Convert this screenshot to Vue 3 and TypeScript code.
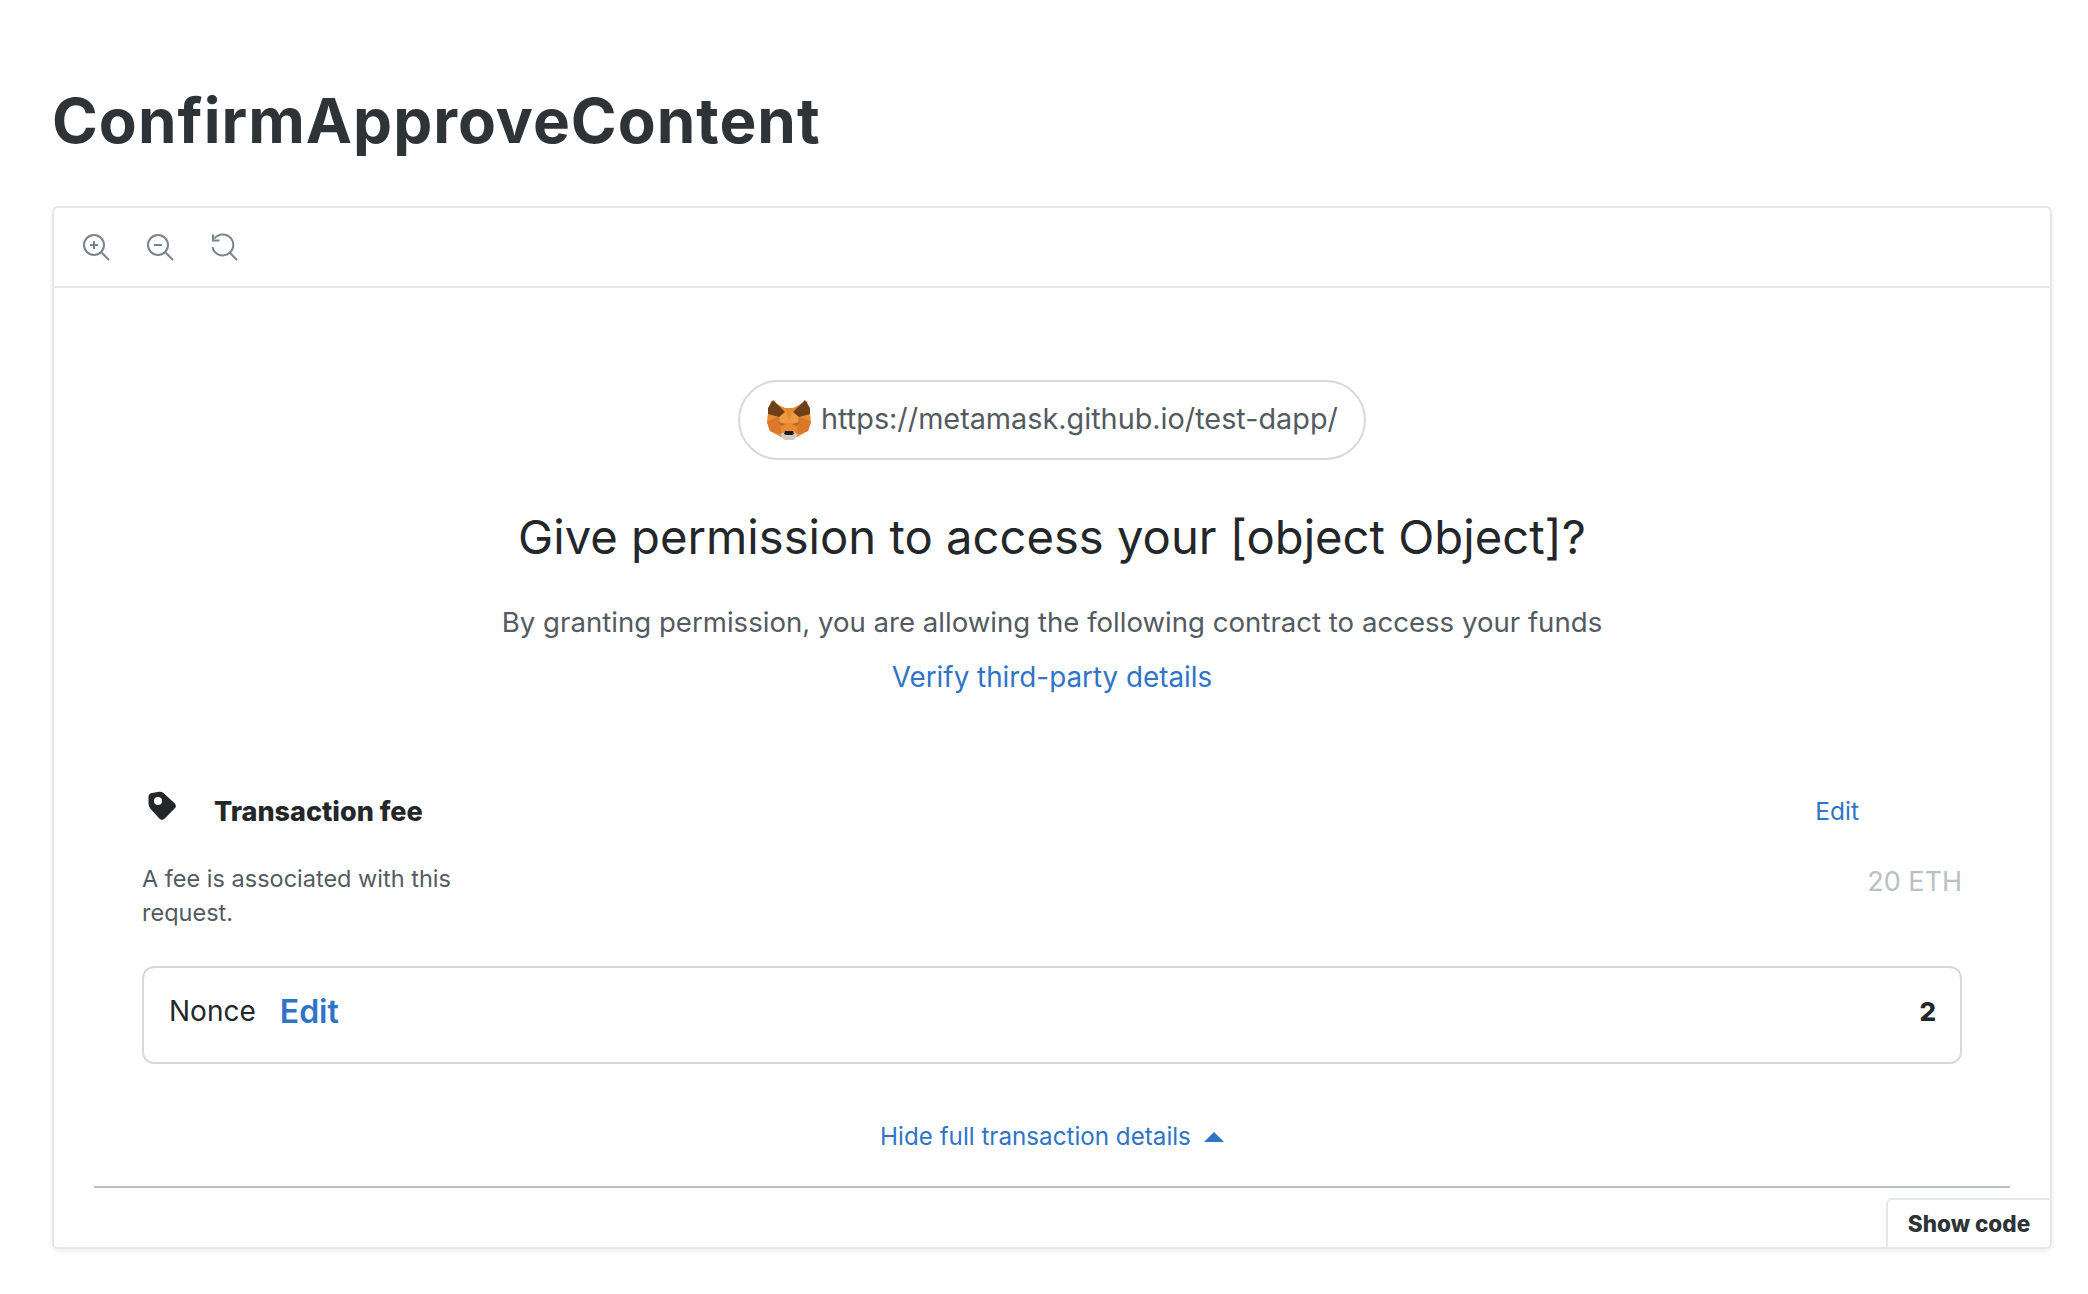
<script setup lang="ts">
const zoomIcons: string[] = ['M9 13h8M13 9v8', 'M9 13h8']
</script>

<template>
  <main class="page">
    <h1 class="title">ConfirmApproveContent</h1>
    <section class="card">
      <div class="toolbar">
        <svg v-for="(d, i) in zoomIcons" :key="i" class="tool" viewBox="0 0 32 32" fill="none">
          <circle cx="13" cy="13" r="10" />
          <path :d="d" />
          <path d="M20.5 20.5 28 28" />
        </svg>
        <svg class="tool" viewBox="0 0 32 32" fill="none">
          <path d="M5.5 6.5A10.5 10.5 0 1 1 3.5 15" />
          <path d="M4 2.5v6h6.5" />
          <path d="M20.5 20.5 28 28" />
        </svg>
      </div>
      <div class="content">
        <div class="origin">
          <svg class="fox" viewBox="0 0 46 42">
            <polygon fill="#e88a2e" points="5,2 19,9 27,9 41,2 44,14 45,23 42,32 31,38 15,38 4,32 1,23 2,14" />
            <polygon fill="#f09a45" points="13,16 19,11 23,22 23,24 14,25" />
            <polygon fill="#f09a45" points="33,16 27,11 23,22 23,24 32,25" />
            <polygon fill="#d9772a" points="1,23 13,17 14,26 16,36 4,32" />
            <polygon fill="#d9772a" points="45,23 33,17 32,26 30,36 42,32" />
            <polygon fill="#6f3f1c" points="7,1 19,13 13,18 2,15 2,9" />
            <polygon fill="#6f3f1c" points="39,1 27,13 33,18 44,15 44,9" />
            <polygon fill="#b3672f" points="12,23 20,25 15,27" />
            <polygon fill="#b3672f" points="34,23 26,25 31,27" />
            <polygon fill="#d7c9bd" points="14,35 19,33 27,33 32,35 28,41 18,41" />
            <polygon fill="#1d1d1d" points="19,32 27,32 28,35 26,36 20,36 18,35" />
          </svg>
          <span class="origin-url">https://metamask.github.io/test-dapp/</span>
        </div>
        <h2 class="heading">Give permission to access your [object Object]?</h2>
        <p class="lead">By granting permission, you are allowing the following contract to access your funds</p>
        <a class="verify">Verify third-party details</a>

        <div class="fee">
          <div class="fee-top">
            <svg class="tag" viewBox="0 0 30 30">
              <path fill="#24272a" d="M1.5 6Q1.500 2.500 5 2L12 .8Q14.500 .5 16.500 2L27.800 12.500Q30 15 27.800 17.300L17.500 27.800Q15 30 12.500 27.800L3.200 17.500Q1.500 15.500 1.500 13Z" />
              <circle cx="11" cy="10" r="4" fill="#fff" />
            </svg>
            <span class="fee-title">Transaction fee</span>
            <a class="fee-edit">Edit</a>
          </div>
          <div class="fee-bottom">
            <p class="fee-text">A fee is associated with this request.</p>
            <span class="fee-value">20 ETH</span>
          </div>
        </div>

        <div class="nonce">
          <span class="nonce-label">Nonce</span>
          <a class="nonce-edit">Edit</a>
          <b class="nonce-value">2</b>
        </div>

        <div class="toggle">
          <a>Hide full transaction details</a>
          <i class="caret"></i>
        </div>
        <hr class="divider" />
      </div>
      <button class="show-code">Show code</button>
    </section>
  </main>
</template>

<style>
html, body { margin: 0; background: #fff; }
</style>

<style scoped>
.page {
  padding: 0 36px 46px 52px;
  font-family: Inter, "Liberation Sans", sans-serif;
  font-variant-ligatures: none;
  color: #24272a;
}
.title {
  margin: 0;
  padding-top: 83px;
  height: 123px;
  font-size: 62px;
  line-height: 76px;
  letter-spacing: 1px;
  font-weight: 700;
  color: #2e3338;
}
.card {
  position: relative;
  border: 2px solid #e4e8ec;
  border-radius: 6px;
  box-shadow: 0 2px 5px rgba(0, 0, 0, 0.08);
  background: #fff;
  height: 1043px;
  box-sizing: border-box;
}
.toolbar {
  display: flex;
  gap: 32px;
  align-items: center;
  padding-left: 27px;
  padding-top: 2px;
  box-sizing: border-box;
  height: 80px;
  border-bottom: 2px solid #e4e8ec;
}
.tool { width: 32px; height: 32px; }
.tool circle, .tool path { stroke: #78838d; stroke-width: 2; }
.content {
  padding: 92px 40px 0;
  display: flex;
  flex-direction: column;
  align-items: center;
}
.origin {
  display: flex;
  align-items: center;
  gap: 9px;
  height: 80px;
  box-sizing: border-box;
  padding: 0 26px;
  border: 2px solid #d6d9dc;
  border-radius: 40px;
  font-size: 28.8px;
  color: #535a61;
}
.origin-url { padding-bottom: 4px; }
.fox { width: 46px; height: 42px; flex: none; }
.heading {
  margin: 45px 0 0;
  font-size: 47.2px;
  line-height: 64px;
  font-weight: 400;
  color: #24272a;
}
.lead {
  margin: 33px 0 0;
  font-size: 27.6px;
  line-height: 40px;
  color: #535a61;
}
.verify {
  margin-top: 15px;
  font-size: 27.8px;
  line-height: 40px;
  color: #2f74c7;
}
.fee {
  align-self: stretch;
  margin: 97px 48px 0 48px;
}
.fee-top {
  display: flex;
  align-items: center;
  height: 34px;
}
.tag { width: 30px; height: 30px; margin-left: 5px; margin-top: -10px; }
.fee-title { margin-left: 37px; font-size: 27px; font-weight: 800; }
.fee-edit { margin-left: auto; margin-right: 103px; font-size: 24.5px; color: #2f74c7; }
.fee-bottom {
  display: flex;
  justify-content: space-between;
  margin-top: 34px;
}
.fee-text {
  margin: 0;
  width: 330px;
  font-size: 23.5px;
  line-height: 34px;
  color: #535a61;
}
.fee-value { font-size: 27px; line-height: 40px; color: #bbc0c5; }
.nonce {
  align-self: stretch;
  display: flex;
  align-items: center;
  height: 98px;
  box-sizing: border-box;
  margin: 36px 48px 0 48px;
  padding: 0 24px 8px 25px;
  border: 2px solid #d6d9dc;
  border-radius: 12px;
}
.nonce-label { font-size: 28px; }
.nonce-edit { margin-left: 24px; font-size: 32px; font-weight: 600; color: #2f74c7; }
.nonce-value { margin-left: auto; font-size: 26px; font-weight: 800; }
.toggle {
  display: flex;
  align-items: center;
  gap: 13px;
  margin-top: 52px;
  height: 40px;
  font-size: 24.2px;
  color: #2f74c7;
}
.caret {
  width: 0;
  height: 0;
  border-left: 10px solid transparent;
  border-right: 10px solid transparent;
  border-bottom: 10px solid #2f74c7;
  margin-top: 2px;
}
.divider {
  align-self: stretch;
  margin: 30px 0 0;
  border: 0;
  border-top: 2px solid #bbc0c5;
}
.show-code {
  position: absolute;
  right: 0;
  bottom: 0;
  width: 164px;
  height: 49px;
  padding: 0;
  background: #fff;
  border: 2px solid #e4e8ec;
  border-width: 2px 0 0 2px;
  border-radius: 6px 0 5px 0;
  font: 800 22.5px Inter, "Liberation Sans", sans-serif;
  color: #2e3338;
}
</style>
